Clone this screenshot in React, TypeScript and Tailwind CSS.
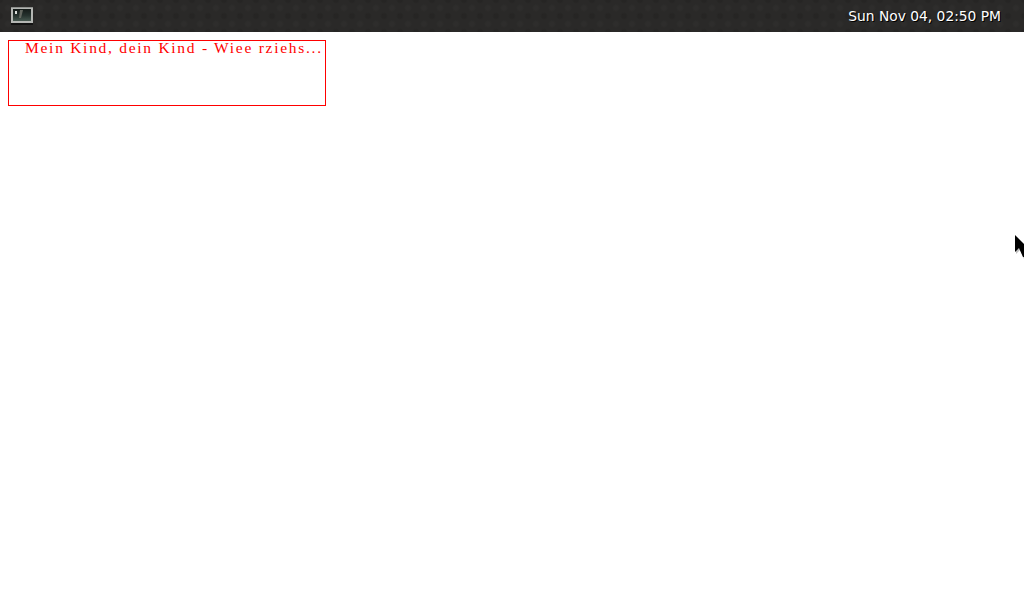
import React from 'react';

function TerminalIcon() {
  return (
    <svg width="22" height="18" viewBox="0 0 22 18" className="block">
      <defs>
        <linearGradient id="screen" x1="0" y1="0" x2="0" y2="1">
          <stop offset="0" stopColor="#141a18" />
          <stop offset="0.55" stopColor="#26322e" />
          <stop offset="1" stopColor="#46574f" />
        </linearGradient>
      </defs>
      <rect x="0" y="0" width="22" height="16" fill="#b4b6b3" />
      <rect x="0" y="0" width="22" height="1" fill="#8e908d" />
      <rect x="2" y="2" width="18" height="12" fill="url(#screen)" />
      <rect x="4" y="4" width="2" height="3" fill="#d8dbd9" />
      <path d="M8 11 L9 3 L12 3 L10 11 Z" fill="#62665f" />
      <rect x="0" y="16" width="22" height="2" fill="#121212" />
    </svg>
  );
}

function Cursor() {
  return (
    <svg width="10" height="24" viewBox="0 0 10 24" className="block">
      <path d="M1 1 L1 19 L5 15 L9 24 L10 24 L10 12 Z" fill="#8a8a8a" opacity="0.55" />
      <path d="M0 0 L0 17 L4 13 L8 22 L10 22 L10 10 Z" fill="#000000" />
    </svg>
  );
}

export default function App() {
  return (
    <div className="relative flex h-[600px] w-[1024px] flex-col overflow-hidden bg-white">
      <header className="flex h-8 shrink-0 items-center justify-between bg-[#2a2928] bg-[radial-gradient(circle,#2e2d2c_2px,transparent_4px),radial-gradient(circle,#262524_2px,transparent_4px)] bg-[length:16px_16px] bg-[position:0_0,8px_8px] pl-[11px] pr-[23px]">
        <TerminalIcon />
        <span className="font-['DejaVu_Sans',sans-serif] text-[13.8px] text-white [text-shadow:1px_1px_0_#000]">
          Sun Nov 04, 02:50 PM
        </span>
      </header>
      <main className="p-2">
        <div className="h-[66px] w-[318px] border border-[#ff0000] pl-4">
          <p className="whitespace-nowrap font-['Liberation_Serif',serif] text-[15.5px] leading-[14px] tracking-[1.72px] text-[#ff0000]">
            Mein Kind, dein Kind - Wiee rziehs...
          </p>
        </div>
      </main>
      <div className="absolute left-[1015px] top-[235px]">
        <Cursor />
      </div>
    </div>
  );
}
